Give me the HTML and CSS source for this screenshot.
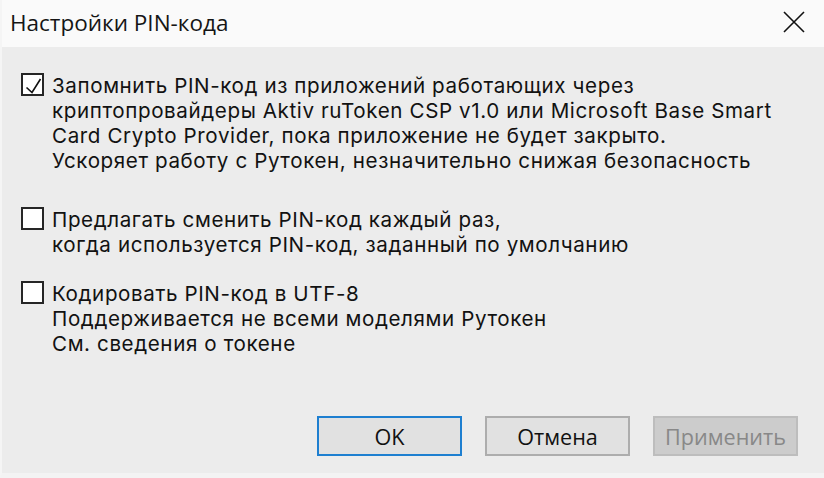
FILE: index.html
```html
<!DOCTYPE html>
<html lang="ru">
<head>
<meta charset="utf-8">
<title>Настройки PIN-кода</title>
<link rel="stylesheet" href="styles.css">
</head>
<body>
<div class="window">
  <div class="titlebar">
    <span class="title">Настройки PIN-кода</span>
    <span class="close" aria-label="Закрыть">
      <svg width="22" height="22" viewBox="0 0 22 22"><path d="M1 1 L21 21 M21 1 L1 21" stroke="#111" stroke-width="1.6" fill="none"/></svg>
    </span>
  </div>
  <div class="content">
    <div class="options">
      <div class="option opt1">
        <span class="box checked">
          <svg width="23" height="23" viewBox="0 0 23 23"><path d="M5.5 14.5 L11 19.5 L19.5 6" stroke="#111" stroke-width="1.6" fill="none"/></svg>
        </span>
        <div class="label">Запомнить PIN-код из приложений работающих через<br>криптопровайдеры Aktiv ruToken CSP v1.0 или Microsoft Base Smart<br>Card Crypto Provider, пока приложение не будет закрыто.<br>Ускоряет работу с Рутокен, незначительно снижая безопасность</div>
      </div>
      <div class="option opt2">
        <span class="box"></span>
        <div class="label">Предлагать сменить PIN-код каждый раз,<br>когда используется PIN-код, заданный по умолчанию</div>
      </div>
      <div class="option opt3">
        <span class="box"></span>
        <div class="label">Кодировать PIN-код в UTF-8<br>Поддерживается не всеми моделями Рутокен<br>См. сведения о токене</div>
      </div>
    </div>
    <div class="footer">
      <button class="btn default">OK</button>
      <button class="btn">Отмена</button>
      <button class="btn disabled" disabled>Применить</button>
    </div>
  </div>
</div>
</body>
</html>
```
FILE: styles.css
```css
* { box-sizing: border-box; }
html, body { margin: 0; padding: 0; }
body {
  width: 824px;
  height: 478px;
  overflow: hidden;
  font-family: "Open Sans", "Noto Sans", sans-serif;
  color: #111;
  background: #ececec;
}
.window {
  width: 824px;
  height: 478px;
  display: flex;
  flex-direction: column;
  border-left: 2px solid #f5f5f5;
  border-bottom: 5px solid #f3f3f3;
}
.titlebar {
  height: 47px;
  flex: none;
  background: #fafafa;
  display: flex;
  align-items: center;
  justify-content: space-between;
  padding: 0 19px 0 8px;
}
.title {
  font-size: 22.5px;
  color: #151515;
  margin-top: -2px;
}
.close { display: flex; margin-top: -3px; }
.content {
  flex: 1;
  display: flex;
  flex-direction: column;
  justify-content: space-between;
  padding: 26px 26px 17px 19px;
}
.options { display: flex; flex-direction: column; }
.option { display: flex; align-items: flex-start; }
.opt2 { margin-top: 34px; }
.opt3 { margin-top: 24px; }
.box {
  width: 23px;
  height: 23px;
  flex: none;
  border: 2px solid #262626;
  background: #fff;
  margin-top: 0;
  margin-right: 8px;
  position: relative;
}
.box svg { position: absolute; left: -2px; top: -2px; }
.label {
  font-family: Inter, "Open Sans", sans-serif;
  font-size: 20.6px;
  letter-spacing: 0.6px;
  line-height: 25px;
  color: #121212;
}
.footer {
  display: flex;
  justify-content: flex-end;
  gap: 23px;
}
.btn {
  width: 145px;
  height: 40px;
  font-family: inherit;
  font-size: 21.6px;
  color: #111;
  background: #e1e1e1;
  border: 2px solid #adadad;
  padding: 0;
}
.btn.default { border-color: #1e7fd0; }
.btn.disabled {
  background: #cccccc;
  border-color: #bdbdbd;
  color: #888;
}
```
